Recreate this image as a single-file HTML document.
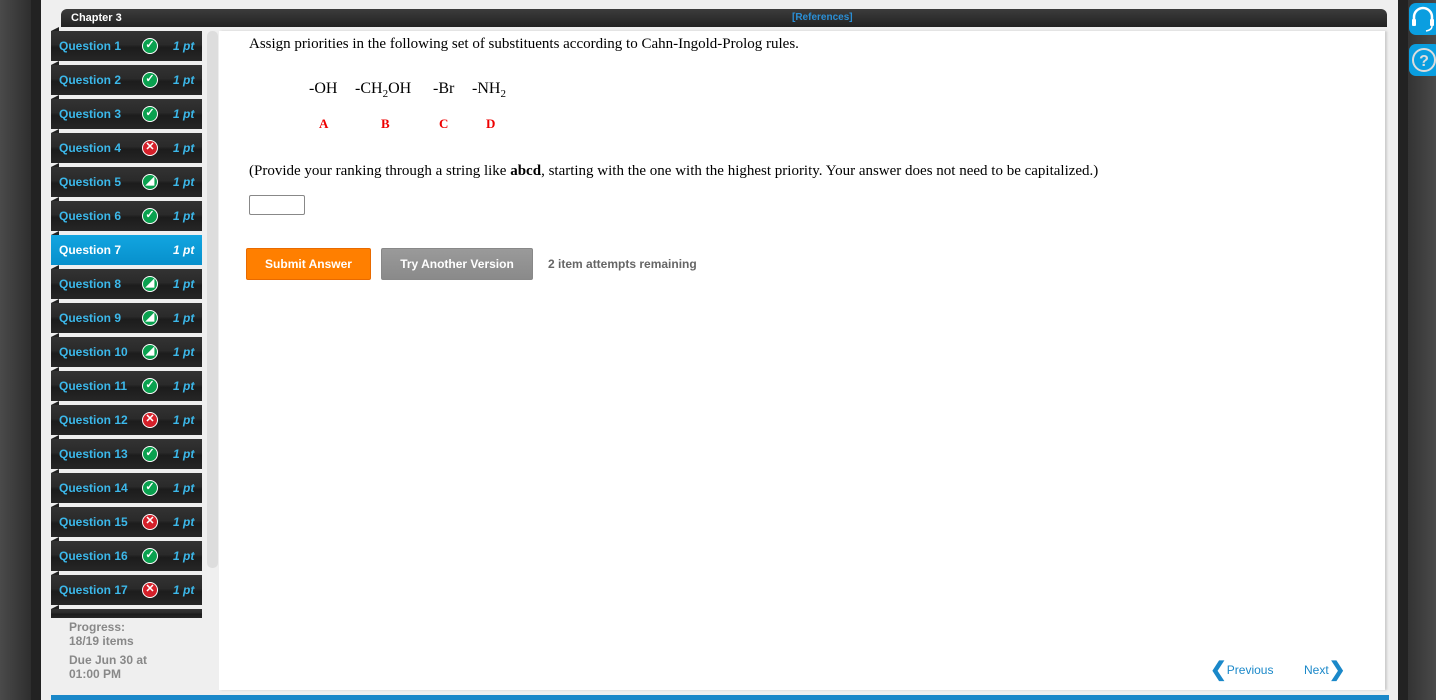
<!DOCTYPE html>
<html><head><meta charset="utf-8"><style>
*{margin:0;padding:0;box-sizing:border-box}
body{width:1436px;height:700px;overflow:hidden;background:#3a3a3a;font-family:"Liberation Sans",Arial,sans-serif;position:relative}
.lstrip{position:absolute;left:0;top:0;width:31px;height:700px;background:linear-gradient(90deg,#4a4a4a,#2e2e2e)}
.lstrip2{position:absolute;left:31px;top:0;width:10px;height:700px;background:#222}
.panel{position:absolute;left:41px;top:0;width:1357px;height:700px;background:#efefef}
.rdark{position:absolute;left:1398px;top:0;width:10px;height:700px;background:#222}
.rstrip{position:absolute;left:1408px;top:0;width:28px;height:700px;background:linear-gradient(90deg,#333,#4a4a4a)}
.chap{position:absolute;left:61px;top:9px;width:1326px;height:18px;background:linear-gradient(#3c3c3c,#222);border-radius:6px 6px 0 0;color:#fff;font-weight:bold;font-size:11px;line-height:18px;padding-left:10px}
.chap span{position:absolute;left:731px;color:#2a8fd6;font-size:10px}
.content{position:absolute;left:219px;top:31px;width:1166px;height:659px;background:#fff;box-shadow:2px 0 2px #ccc}
.track{position:absolute;left:207px;top:31px;width:11px;height:537px;background:#ddd;border-radius:5px}
.q{position:absolute;left:51px;width:151px;height:30px;background:linear-gradient(#333 0%,#2a2a2a 45%,#1c1c1c 55%,#262626);color:#3cb8ea;font-weight:bold;font-size:12px;line-height:30px;padding-left:8px}
.q:before{content:"";position:absolute;left:0;top:-4px;width:8px;height:4px;background:#222;clip-path:polygon(0 100%,100% 0,100% 100%)}
.q .pt{position:absolute;left:122px;font-style:italic}
.q .ic{position:absolute;left:91px;top:7px;width:16px;height:16px;border-radius:50%;border:1.5px solid #fff;color:#fff;font-size:11px;line-height:13px;text-align:center}
.ok{background:#0aa14f}.x{background:#d5202a}
.act{background:linear-gradient(#12a5e0,#0790cc);color:#fff}
.prog{position:absolute;left:69px;top:620px;color:#888;font-weight:bold;font-size:12px;line-height:14px}
.serif{font-family:"Liberation Serif",serif;position:absolute;font-size:15px;color:#000;white-space:nowrap}
.chem{font-size:16px}
.red{color:#e00;font-weight:bold;font-size:13px}
.btn{position:absolute;top:248px;height:32px;border-radius:2px;color:#fff;font-weight:bold;font-size:12px;line-height:30px;text-align:center}
.nav{position:absolute;top:655px;color:#1a88c9;font-size:12px}
.ri{position:absolute;left:1409px;width:32px;height:32px;border-radius:7px;background:#0a9ee0}
</style></head><body>
<div class="lstrip"></div><div class="lstrip2"></div><div class="panel"></div><div class="rdark"></div><div class="rstrip"></div>
<div class="ri" style="top:3px"><svg width="27" height="32" viewBox="0 0 27 32"><path d="M5 18V14a9 9 0 0 1 18 0v4" stroke="#fff" stroke-width="2.5" fill="none"/><rect x="3" y="16" width="4" height="7" rx="1" fill="#fff"/><rect x="21" y="16" width="4" height="7" rx="1" fill="#fff"/><path d="M23 23q0 4-6 5" stroke="#fff" stroke-width="1.5" fill="none"/></svg></div>
<div class="ri" style="top:44px"><svg width="27" height="32" viewBox="0 0 27 32"><circle cx="15" cy="16" r="11" stroke="#ddd" stroke-width="2" fill="none"/><text x="15" y="22" text-anchor="middle" fill="#ddd" font-size="16" font-weight="bold" font-family="Liberation Sans">?</text></svg></div>
<div class="chap">Chapter 3<span>[References]</span></div>
<div class="content"></div>
<div class="track"></div>

<div class="q" style="top:31px">Question 1<span class="ic ok">✓</span><span class="pt">1 pt</span></div>
<div class="q" style="top:65px">Question 2<span class="ic ok">✓</span><span class="pt">1 pt</span></div>
<div class="q" style="top:99px">Question 3<span class="ic ok">✓</span><span class="pt">1 pt</span></div>
<div class="q" style="top:133px">Question 4<span class="ic x">✕</span><span class="pt">1 pt</span></div>
<div class="q" style="top:167px">Question 5<span class="ic ok">◢</span><span class="pt">1 pt</span></div>
<div class="q" style="top:201px">Question 6<span class="ic ok">✓</span><span class="pt">1 pt</span></div>
<div class="q act" style="top:235px">Question 7<span class="pt">1 pt</span></div>
<div class="q" style="top:269px">Question 8<span class="ic ok">◢</span><span class="pt">1 pt</span></div>
<div class="q" style="top:303px">Question 9<span class="ic ok">◢</span><span class="pt">1 pt</span></div>
<div class="q" style="top:337px">Question 10<span class="ic ok">◢</span><span class="pt">1 pt</span></div>
<div class="q" style="top:371px">Question 11<span class="ic ok">✓</span><span class="pt">1 pt</span></div>
<div class="q" style="top:405px">Question 12<span class="ic x">✕</span><span class="pt">1 pt</span></div>
<div class="q" style="top:439px">Question 13<span class="ic ok">✓</span><span class="pt">1 pt</span></div>
<div class="q" style="top:473px">Question 14<span class="ic ok">✓</span><span class="pt">1 pt</span></div>
<div class="q" style="top:507px">Question 15<span class="ic x">✕</span><span class="pt">1 pt</span></div>
<div class="q" style="top:541px">Question 16<span class="ic ok">✓</span><span class="pt">1 pt</span></div>
<div class="q" style="top:575px">Question 17<span class="ic x">✕</span><span class="pt">1 pt</span></div>
<div class="q" style="top:609px;height:9px"></div>
<div style="position:absolute;left:41px;top:618px;width:165px;height:82px;background:#efefef"></div>
<div class="prog">Progress:<br>18/19 items<div style="height:5px"></div>Due Jun 30 at<br>01:00 PM</div>

<div class="serif" style="left:249px;top:36px">Assign priorities in the following set of substituents according to Cahn-Ingold-Prolog rules.</div>
<div class="serif chem" style="left:309px;top:80px">-OH</div>
<div class="serif chem" style="left:355px;top:80px">-CH<sub style="font-size:11px">2</sub>OH</div>
<div class="serif chem" style="left:433px;top:80px">-Br</div>
<div class="serif chem" style="left:472px;top:80px">-NH<sub style="font-size:11px">2</sub></div>
<div class="serif red" style="left:319px;top:116px">A</div>
<div class="serif red" style="left:381px;top:116px">B</div>
<div class="serif red" style="left:439px;top:116px">C</div>
<div class="serif red" style="left:486px;top:116px">D</div>
<div class="serif" style="left:249px;top:163px">(Provide your ranking through a string like <b>abcd</b>, starting with the one with the highest priority. Your answer does not need to be capitalized.)</div>
<div style="position:absolute;left:249px;top:195px;width:56px;height:20px;border:1px solid #888;border-radius:2px"></div>
<div class="btn" style="left:246px;width:125px;background:#ff7f00;border:1px solid #e86a00">Submit Answer</div>
<div class="btn" style="left:381px;width:152px;background:linear-gradient(#9a9a9a,#8a8a8a);border:1px solid #888">Try Another Version</div>
<div style="position:absolute;left:548px;top:257px;font-size:12px;font-weight:bold;color:#666">2 item attempts remaining</div>
<div class="nav" style="left:1210px"><b style="font-size:20px;position:relative;top:2px">❮</b>Previous</div>
<div class="nav" style="left:1304px">Next<b style="font-size:20px;position:relative;top:2px">❯</b></div>
<div style="position:absolute;left:51px;top:695px;width:1338px;height:5px;background:#1a88c9"></div>
</body></html>
